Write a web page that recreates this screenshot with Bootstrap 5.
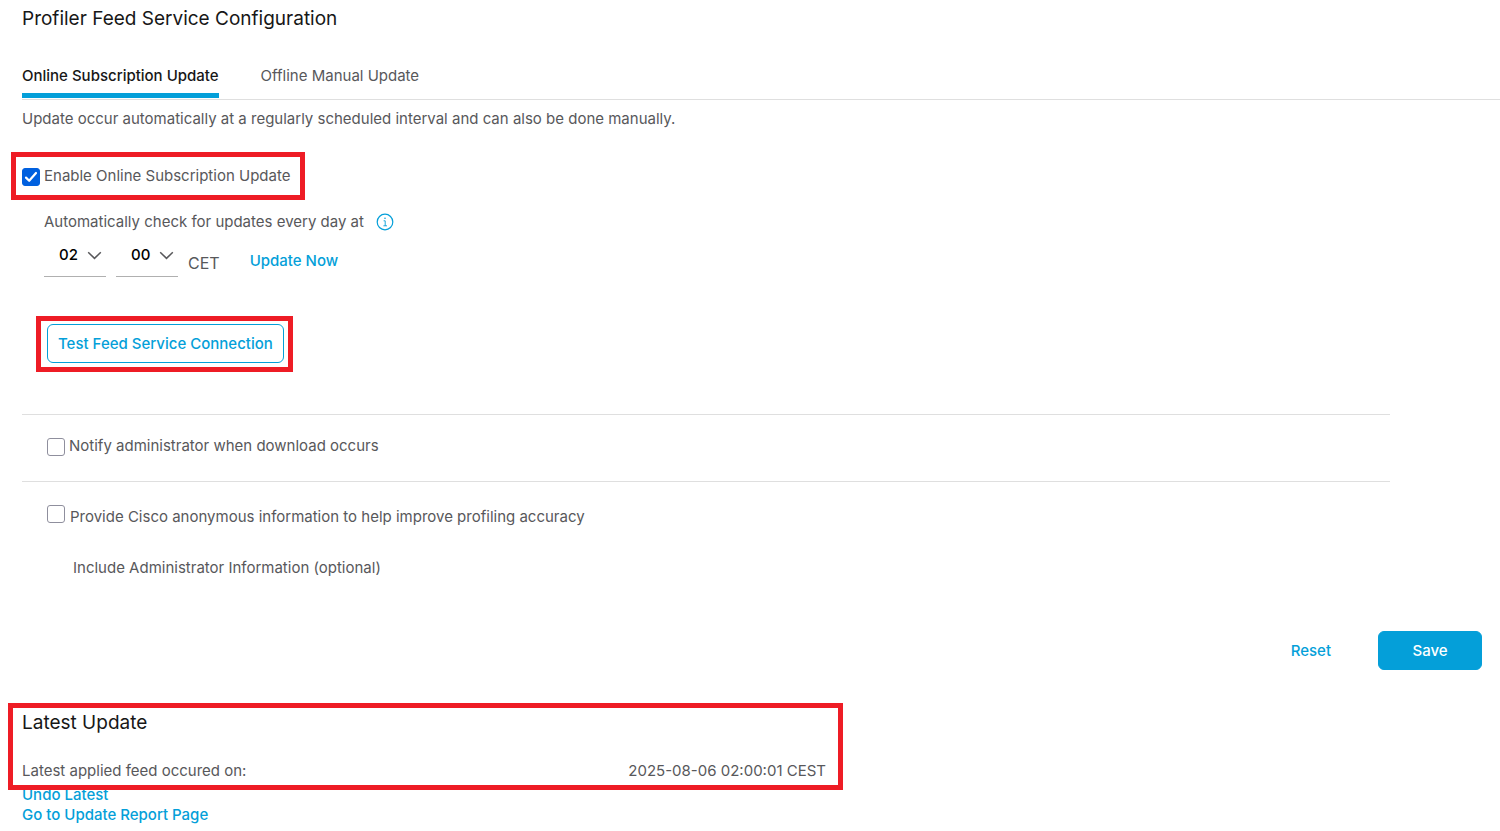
<!DOCTYPE html>
<html lang="en">
<head>
<meta charset="utf-8">
<meta name="viewport" content="width=device-width, initial-scale=1">
<title>Profiler Feed Service Configuration</title>
<link href="https://cdn.jsdelivr.net/npm/bootstrap@5.3.0/dist/css/bootstrap.min.css" rel="stylesheet">
<style>
  :root { --accent: #049fd9; --ink: #58585b; --rule: #dfdfdf; --flag: #ee1c25; }
  body { font-family: Inter, "Liberation Sans", sans-serif; font-size: 15px; line-height: 20px; color: var(--ink); background: #fff; }
  a, .btn-link { color: var(--accent); text-decoration: none; }
  .btn { font-size: 15px; line-height: 20px; }
  .page { padding: 7px 0 6px 22px; }
  .page-title, .section-title { font-size: 19px; line-height: 24px; font-weight: 400; color: #171717; margin: 0; }
  .feed-tabs { gap: 42px; margin-top: 35px; padding-bottom: 1px; border-bottom: 1px solid var(--rule); }
  .feed-tabs .nav-link { padding: 0 0 7px; color: var(--ink); border-bottom: 5px solid transparent; }
  .feed-tabs .nav-link.active { color: #171717; font-weight: 500; border-color: var(--accent); }
  .intro { margin: 9px 0 37px; }
  .tick { display: flex; gap: 4px; width: max-content; max-width: 100%; }
  .tick .form-check-input { width: 18px; height: 18px; margin: 2px 0 0; flex: none; border: 1px solid #8f8f9d; border-radius: 3px; }
  .tick .form-check-input:checked { background-color: #0060df; border-color: #0060df; background-size: 16px 16px; background-image: url("data:image/svg+xml,%3Csvg xmlns='http://www.w3.org/2000/svg' viewBox='0 0 16 16'%3E%3Cpath d='M3 8.6L6.2 11.8L13 4' fill='none' stroke='white' stroke-width='2.2' stroke-linecap='round' stroke-linejoin='round'/%3E%3C/svg%3E"); }
  .flagged { position: relative; }
  .flagged::after { content: ""; position: absolute; border: 5px solid var(--flag); pointer-events: none; }
  .flag-enable::after { inset: -14px -15px -14px -11px; }
  .flag-test::after { inset: -8px -9px -9px -11px; }
  .flag-latest::after { inset: -8px -17px -9px -14px; }
  .schedule { padding-left: 22px; margin-top: 26px; }
  .info { margin-left: 12px; }
  .time-row { gap: 10px; margin-top: 12px; }
  .time-pick { position: relative; width: 62px; height: 33px; border-bottom: 1px solid #b0b0b0; }
  .time-pick select { appearance: none; width: 100%; height: 22px; padding: 0 0 0 15px; border: 0; background: transparent; color: #000; font-size: 15px; line-height: 22px; font-weight: 500; }
  .time-pick svg { position: absolute; right: 4px; top: 7px; pointer-events: none; }
  .zone { font-size: 16px; margin-top: 9px; }
  .update-now { font-weight: 500; margin: 7px 0 0 20px; }
  .test-wrap { width: max-content; margin: 47px 0 51px 25px; }
  .btn-test { --bs-btn-color: var(--accent); --bs-btn-border-color: var(--accent); padding: 9px 10px 8px; border-radius: 6px; font-weight: 500; }
  .option { margin-right: 110px; border-top: 1px solid var(--rule); padding-left: 25px; }
  .notify { padding-top: 21px; padding-bottom: 25px; }
  .provide { padding-top: 21px; }
  .provide .tick { gap: 5px; }
  .provide label { padding-top: 4px; }
  .include { margin: 31px 0 0 26px; }
  .actions { gap: 34px; margin: 53px 18px 0 0; }
  .actions .btn { font-weight: 500; }
  .btn-save { --bs-btn-color: #fff; --bs-btn-bg: var(--accent); --bs-btn-border-color: var(--accent); min-width: 104px; padding: 9px 12px 8px; border-radius: 6px; }
  .latest { max-width: 804px; margin-top: 41px; }
  .latest-row { margin-top: 26px; }
  .links a { font-weight: 500; }
</style>
</head>
<body>
<main class="page">
  <h1 class="page-title">Profiler Feed Service Configuration</h1>
  <nav class="nav feed-tabs" aria-label="Update mode">
    <a class="nav-link active" href="#online" aria-current="page">Online Subscription Update</a>
    <a class="nav-link" href="#offline">Offline Manual Update</a>
  </nav>
  <p class="intro">Update occur automatically at a regularly scheduled interval and can also be done manually.</p>

  <div class="tick flagged flag-enable">
    <input class="form-check-input" type="checkbox" id="enable" checked>
    <label for="enable">Enable Online Subscription Update</label>
  </div>

  <section class="schedule" id="online">
    <div class="d-flex align-items-center">
      <span>Automatically check for updates every day at</span>
      <svg class="info" width="18" height="18" viewBox="0 0 18 18" fill="none" stroke="#049fd9" role="img" aria-label="Information"><circle cx="9" cy="9" r="7.8" stroke-width="1.2"/><path d="M7.6 7.8H9.2V12.8M7.4 12.8H11" stroke-width=".9"/><circle cx="9" cy="5.3" r=".8" fill="#049fd9" stroke="none"/></svg>
    </div>
    <div class="time-row d-flex align-items-start">
      <div class="time-pick">
        <select aria-label="Hour"><option>02</option><option>14</option></select>
        <svg width="15" height="9" viewBox="0 0 15 9" fill="none" stroke="#58585b" stroke-width="1.5"><path d="M1.2 1.2L7.5 7.4L13.8 1.2"/></svg>
      </div>
      <div class="time-pick">
        <select aria-label="Minute"><option>00</option><option>30</option></select>
        <svg width="15" height="9" viewBox="0 0 15 9" fill="none" stroke="#58585b" stroke-width="1.5"><path d="M1.2 1.2L7.5 7.4L13.8 1.2"/></svg>
      </div>
      <span class="zone">CET</span>
      <a class="update-now" href="#update">Update Now</a>
    </div>
  </section>

  <div class="test-wrap flagged flag-test">
    <button type="button" class="btn btn-test d-block">Test Feed Service Connection</button>
  </div>

  <div class="option notify">
    <div class="tick">
      <input class="form-check-input" type="checkbox" id="notify">
      <label for="notify">Notify administrator when download occurs</label>
    </div>
  </div>
  <div class="option provide">
    <div class="tick">
      <input class="form-check-input" type="checkbox" id="provide">
      <label for="provide">Provide Cisco anonymous information to help improve profiling accuracy</label>
    </div>
    <p class="include">Include Administrator Information (optional)</p>
  </div>

  <div class="actions d-flex justify-content-end align-items-center">
    <button type="button" class="btn btn-link text-decoration-none">Reset</button>
    <button type="button" class="btn btn-save">Save</button>
  </div>

  <section class="latest flagged flag-latest">
    <h2 class="section-title">Latest Update</h2>
    <div class="latest-row d-flex justify-content-between">
      <span>Latest applied feed occured on:</span>
      <time datetime="2025-08-06T02:00:01">2025-08-06 02:00:01 CEST</time>
    </div>
  </section>
  <div class="links d-flex flex-column align-items-start mt-1">
    <a href="#undo">Undo Latest</a>
    <a href="#report">Go to Update Report Page</a>
  </div>
</main>
<script src="https://cdn.jsdelivr.net/npm/bootstrap@5.3.0/dist/js/bootstrap.bundle.min.js"></script>
</body>
</html>
